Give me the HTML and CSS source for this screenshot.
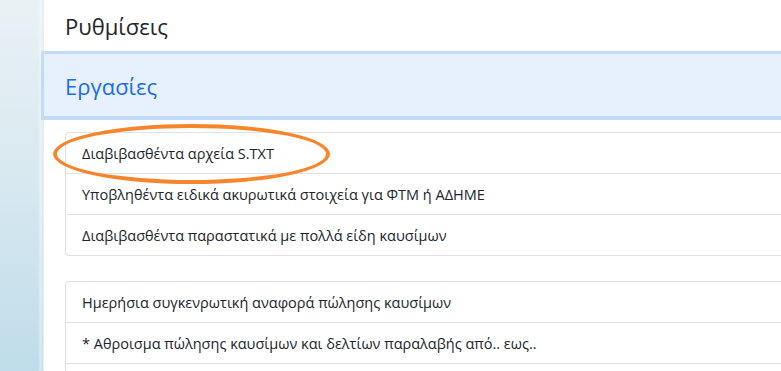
FILE: index.html
```html
<!DOCTYPE html>
<html lang="el">
<head>
  <meta charset="UTF-8">
  <meta name="viewport" content="width=device-width, initial-scale=1.0">
  <title>Ρυθμίσεις - Εργασίες</title>
  <link rel="stylesheet" href="styles.css">
</head>
<body>
  <aside class="sidebar"></aside>

  <main class="content">
    <h1 class="page-title">Ρυθμίσεις</h1>

    <div class="section-band">
      <h2>Εργασίες</h2>
    </div>

    <ul class="list-group">
      <li class="list-item marked">Διαβιβασθέντα αρχεία S.TXT</li>
      <li class="list-item">Υποβληθέντα ειδικά ακυρωτικά στοιχεία για ΦΤΜ ή ΑΔΗΜΕ</li>
      <li class="list-item">Διαβιβασθέντα παραστατικά με πολλά είδη καυσίμων</li>
    </ul>

    <ul class="list-group">
      <li class="list-item">Ημερήσια συγκενρωτική αναφορά πώλησης καυσίμων</li>
      <li class="list-item">* Αθροισμα πώλησης καυσίμων και δελτίων παραλαβής από.. εως..</li>
      <li class="list-item">&nbsp;</li>
    </ul>
  </main>
</body>
</html>
```

FILE: styles.css
```css
html, body { margin: 0; height: 100%; }
body { display: flex; font-family: "Open Sans", "Noto Sans", sans-serif; color: #212529;
  background: #fff; overflow: hidden; }

.sidebar { width: 44px; flex: none;
  background: linear-gradient(to right, rgba(255,255,255,0) 88%, rgba(255,255,255,0.45) 95%, rgba(255,255,255,0) 100%),
    linear-gradient(to bottom, #e9f1f4 0%, #d9e9f0 45%, #bfdcea 100%);
  border-right: 1px solid #e6eef2; box-sizing: border-box; }

.content { flex: 1; min-width: 0; background: #fff; }

.page-title { margin: 0; height: 51px; padding: 1px 0 0 21px; font-size: 22px; font-weight: 400;
  line-height: 50px; box-sizing: border-box; }

.section-band { margin-left: -3px; height: 69px; box-sizing: border-box;
  background: #e7f0fd; border: 4px solid #c2dbf8; border-width: 3px 0 4px 3px;
  display: flex; align-items: center; padding: 1px 0 0 21px; }
.section-band h2 { margin: 0; font-size: 22px; font-weight: 400; color: #1b6ee2; }

.list-group { list-style: none; margin: 12px -4px 25px 21px; padding: 0;
  border: 1px solid #dee2e6; border-right: none; border-radius: 4px 0 0 4px; }
.list-group + .list-group { margin-top: 0; }
.list-item { height: 40px; line-height: 41px; padding-left: 16px; font-size: 14.5px;
  white-space: nowrap; }
.list-item + .list-item { border-top: 1px solid #dee2e6; }

.marked { position: relative; }
.marked::after { content: ""; position: absolute; left: -13px; top: -9px; width: 269px; height: 52px;
  border: 4px solid #f7852b; border-radius: 50%; }
```
